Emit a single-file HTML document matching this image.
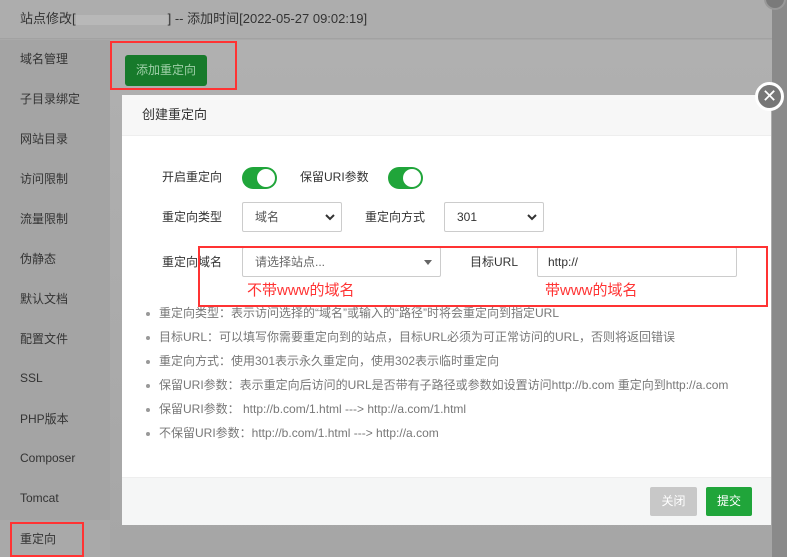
<!DOCTYPE html><html><head><meta charset="utf-8"><style>
*{margin:0;padding:0;box-sizing:border-box}
body{width:787px;height:557px;overflow:hidden;background:#a9a9a9;font-family:"Liberation Sans","Noto Sans CJK SC",sans-serif;position:relative;font-size:12px;line-height:1.3}
.a{position:absolute}
.side div{position:absolute;left:20px;font-size:12px;color:#333}
.lbl{position:absolute;font-size:12px;color:#333}
.sel{position:absolute;border:1px solid #ccc;border-radius:2px;background:#fff;font-size:12px;color:#555;padding-left:12px}
.tg{position:absolute;width:35px;height:22px;border-radius:11px;background:#20a53a}
.tg:after{content:"";position:absolute;right:2px;top:2px;width:18px;height:18px;border-radius:50%;background:#fff}
.li{position:absolute;left:159px;color:#777;font-size:12px;white-space:nowrap}
.li:before{content:"";position:absolute;left:-13px;top:6px;width:4px;height:4px;border-radius:50%;background:#999}
.chev{position:absolute;right:6px;top:10px}
</style></head><body>
<div class="a" style="left:0;top:0;width:787px;height:39px;background:#adadad;border-bottom:1px solid #a2a2a2"></div>
<div class="a" style="left:20px;top:11px;font-size:13px;color:#333">站点修改[<span style="display:inline-block;width:92px;height:10px;background:#b8b8b8;vertical-align:middle"></span>] -- 添加时间[2022-05-27 09:02:19]</div>
<div class="a" style="left:0;top:40px;width:110px;height:480px;background:#a4a4a4"></div>
<div class="a" style="left:110px;top:40px;width:662px;height:517px;background:linear-gradient(#b0b0b0,#a6a6a6)"></div>
<div class="a" style="left:772px;top:0;width:15px;height:557px;background:#8a8a8a"></div>
<div class="a" style="left:764px;top:-12px;width:22px;height:22px;border-radius:50%;background:#7a7a7a;border:2px solid #999"></div>
<div class="side">
<div style="top:52px">域名管理</div><div style="top:92px">子目录绑定</div><div style="top:132px">网站目录</div><div style="top:172px">访问限制</div><div style="top:212px">流量限制</div><div style="top:252px">伪静态</div><div style="top:292px">默认文档</div><div style="top:332px">配置文件</div><div style="top:371px">SSL</div><div style="top:412px">PHP版本</div><div style="top:451px">Composer</div><div style="top:491px">Tomcat</div><div style="top:532px">重定向</div>
</div>
<div class="a" style="left:10px;top:522px;width:74px;height:35px;border:2px solid #f33"></div>
<div class="a" style="left:110px;top:41px;width:127px;height:49px;border:2px solid #f33"></div>
<div class="a" style="left:125px;top:55px;width:82px;height:31px;background:#177a2b;border-radius:3px;color:#9fd0a8;font-size:12px;line-height:31px;text-align:center">添加重定向</div>
<div class="a" style="left:122px;top:95px;width:649px;height:430px;background:#fff"></div>
<div class="a" style="left:122px;top:95px;width:649px;height:41px;background:#f7f7f7;border-bottom:1px solid #eee;padding:12px 20px;font-size:13px;color:#333">创建重定向</div>
<div class="a" style="left:122px;top:477px;width:649px;height:48px;background:#f5f6f6;border-top:1px solid #eee"></div>
<div class="a" style="left:755px;top:82px;width:29px;height:29px;border-radius:50%;background:#777;border:3px solid #fff;color:#fff;font-size:18px;line-height:22px;text-align:center">✕</div>
<div class="lbl" style="left:162px;top:170px">开启重定向</div><div class="tg" style="left:242px;top:167px"></div>
<div class="lbl" style="left:300px;top:170px">保留URI参数</div><div class="tg" style="left:388px;top:167px"></div>
<div class="lbl" style="left:162px;top:210px">重定向类型</div>
<div class="sel" style="left:242px;top:202px;width:100px;height:30px;line-height:28px">域名<svg class="chev" width="10" height="8" viewBox="0 0 10 8"><path d="M1 2l4 4 4-4" stroke="#333" stroke-width="2" fill="none"/></svg></div>
<div class="lbl" style="left:365px;top:210px">重定向方式</div>
<div class="sel" style="left:444px;top:202px;width:100px;height:30px;line-height:28px;color:#333">301<svg class="chev" width="10" height="8" viewBox="0 0 10 8"><path d="M1 2l4 4 4-4" stroke="#333" stroke-width="2" fill="none"/></svg></div>
<div class="lbl" style="left:162px;top:255px">重定向域名</div>
<div class="sel" style="left:242px;top:247px;width:199px;height:30px;line-height:28px;color:#666">请选择站点...<span class="a" style="right:8px;top:12px;border:4px solid transparent;border-top:5px solid #666"></span></div>
<div class="lbl" style="left:470px;top:255px">目标URL</div>
<div class="sel" style="left:537px;top:247px;width:200px;height:30px;line-height:28px;color:#333;padding-left:10px">http://</div>
<div class="a" style="left:198px;top:246px;width:570px;height:61px;border:2px solid #f33"></div>
<div class="a" style="left:247px;top:281px;color:#f33;font-size:15px">不带www的域名</div>
<div class="a" style="left:545px;top:281px;color:#f33;font-size:15px">带www的域名</div>
<div class="li" style="top:306px">重定向类型：表示访问选择的“域名”或输入的“路径”时将会重定向到指定URL</div>
<div class="li" style="top:330px">目标URL：可以填写你需要重定向到的站点，目标URL必须为可正常访问的URL，否则将返回错误</div>
<div class="li" style="top:354px">重定向方式：使用301表示永久重定向，使用302表示临时重定向</div>
<div class="li" style="top:378px">保留URI参数：表示重定向后访问的URL是否带有子路径或参数如设置访问http://b.com 重定向到http://a.com</div>
<div class="li" style="top:402px">保留URI参数： http://b.com/1.html ---> http://a.com/1.html</div>
<div class="li" style="top:426px">不保留URI参数：http://b.com/1.html ---> http://a.com</div>
<div class="a" style="left:650px;top:487px;width:47px;height:29px;background:#c8c8c8;border-radius:2px;color:#fff;line-height:29px;text-align:center">关闭</div>
<div class="a" style="left:706px;top:487px;width:46px;height:29px;background:#20a53a;border-radius:2px;color:#fff;line-height:29px;text-align:center">提交</div>
</body></html>
